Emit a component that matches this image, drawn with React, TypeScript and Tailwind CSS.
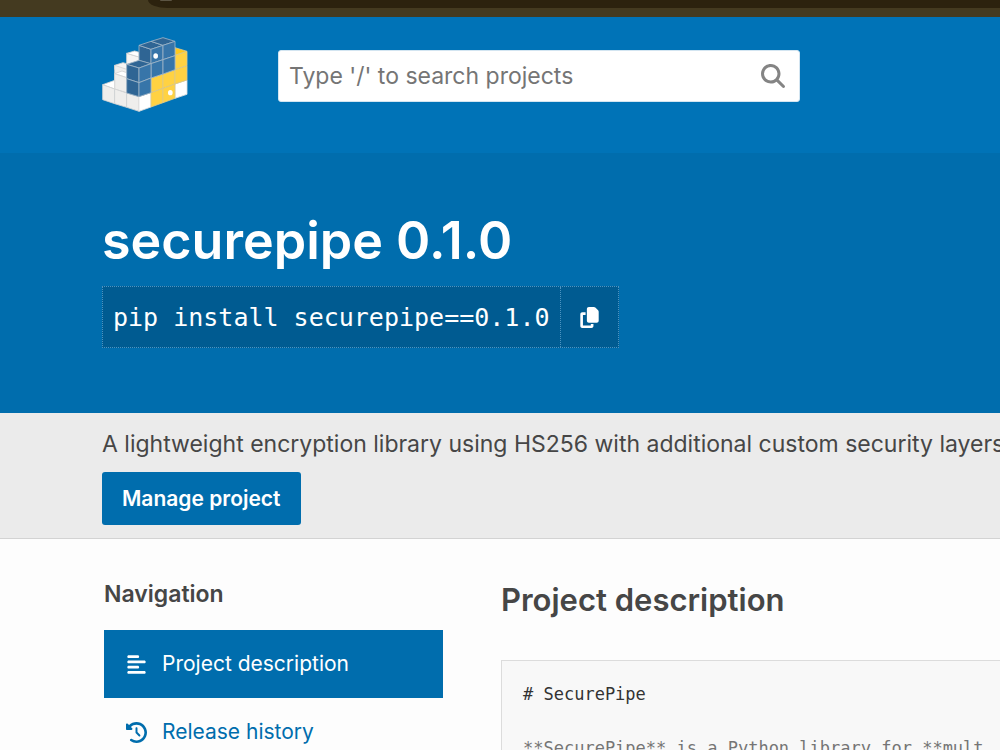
import { useState } from 'react'
import { FaAlignLeft, FaClockRotateLeft, FaCopy, FaMagnifyingGlass } from 'react-icons/fa6'

const PIP_COMMAND = 'pip install securepipe==0.1.0'

function Logo() {
  return (
    <svg viewBox="20 20 258 225" className="h-[75px] w-[86px]" aria-hidden="true">
      <g strokeWidth="2.5" strokeLinejoin="round">
        {/* white steps on the left */}
        <g fill="#efeeec" stroke="#d2d2d2">
          <path d="M94 69L131 80V110H94Z" fill="#f5f4f3" />
          <path d="M94 69L118 62L131 66V80Z" fill="#fff" />
          <path d="M58 105L83 97L94 100V130L58 117Z" fill="#f5f4f3" />
          <path d="M58 105L94 117V187L58 176Z" />
          <path d="M58 130L80 122L94 127V142Z" fill="#fff" />
          <path d="M58 130L94 142V187L58 176Z" />
          <path d="M22 163L58 150V176Z" fill="#fff" />
          <path d="M22 163L58 176V220L22 208Z" />
          <path d="M58 176L94 188V231L58 220Z" />
          <path d="M94 188L131 199V243L94 231Z" />
        </g>
        {/* yellow and white right side */}
        <g fill="#fff" stroke="#dedede">
          <path d="M131 199L167 187V230L131 243Z" />
          <path d="M239 161L275 149V192L239 204Z" />
        </g>
        <g fill="#ffd242" stroke="#dcc98c">
          <path d="M239 52L275 63L239 75Z" fill="#ffc91d" />
          <path d="M167 143L203 131V174L167 187Z" />
          <path d="M167 187L203 174V217L167 230Z" />
          <path d="M203 131L239 118V161L203 174Z" />
          <path d="M203 174L239 161V204L203 217Z" />
          <path d="M239 75L275 63V106L239 118Z" />
          <path d="M239 118L275 106V149L239 161Z" />
        </g>
        {/* blue blocks */}
        <g fill="#3775a9" stroke="#9fb4c6">
          <path d="M131 45L167 57V101L131 90Z" fill="#2f6594" />
          <path d="M131 45L167 33L203 45L167 57Z" fill="#2f6594" />
          <path d="M167 33L203 22L239 33L203 45Z" fill="#2f6594" />
          <path d="M167 57L203 45V88L167 100Z" />
          <path d="M203 45L239 33V76L203 88Z" />
          <path d="M167 100L203 88V131L167 143Z" />
          <path d="M203 88L239 76V118L203 131Z" />
          <path d="M94 102L131 90L167 100L131 113Z" fill="#2f6594" />
          <path d="M94 102L131 113V157L94 145Z" fill="#2f6594" />
          <path d="M94 145L131 157V199L94 188Z" fill="#2f6594" />
          <path d="M131 113L167 100V143L131 157Z" />
          <path d="M131 157L167 143V187L131 199Z" />
        </g>
      </g>
      <ellipse cx="181" cy="77" rx="7" ry="8" fill="#fff" />
      <ellipse cx="225" cy="187" rx="7" ry="8" fill="#fff" />
    </svg>
  )
}

export default function App() {
  const [search, setSearch] = useState('')

  return (
    <div className="h-screen overflow-hidden bg-[#fdfdfd] font-['Inter',sans-serif] text-[#464646]">
      {/* bottom edge of the browser toolbar */}
      <div className="h-[17px] bg-[#443a20]">
        <div className="ml-[148px] h-2 rounded-bl-[20px_8px] bg-[#2c220e] pl-3">
          <div className="h-px w-3 rounded-b-full bg-[#5c5544]" />
        </div>
      </div>

      <header className="flex h-[136px] items-start bg-[#0073b7] pl-[102px] pr-[200px] pt-5">
        <a href="#home" aria-label="PyPI" className="shrink-0">
          <Logo />
        </a>
        <form
          role="search"
          onSubmit={e => e.preventDefault()}
          className="ml-[90px] mt-[13px] flex h-[52px] grow items-center rounded-[3px] border border-[#d3e5f1] bg-white"
        >
          <input
            type="text"
            aria-label="Search PyPI"
            placeholder="Type '/' to search projects"
            value={search}
            onChange={e => setSearch(e.target.value)}
            className="h-full min-w-0 grow bg-transparent pl-[10px] text-[23px] placeholder:text-[#757575] focus:outline-none"
          />
          <button type="submit" aria-label="Search" className="px-[14px] text-[#848484]">
            <FaMagnifyingGlass size={24} />
          </button>
        </form>
      </header>

      <section className="h-[260px] bg-[#006dad] px-[102px] pt-[56px] text-white">
        <h1 className="text-[52px] font-semibold leading-[64px]">securepipe 0.1.0</h1>
        <div className="mt-[13px] inline-flex h-[62px] border border-dotted border-[#4d93c0] bg-[#005b91]">
          <span className="flex items-center whitespace-pre px-[10px] pt-px font-['DejaVu_Sans_Mono',monospace] text-[25px]">
            {PIP_COMMAND}
          </span>
          <button
            type="button"
            aria-label="Copy PIP instructions"
            onClick={() => navigator.clipboard?.writeText(PIP_COMMAND)}
            className="flex w-[58px] items-center justify-center border-l border-dotted border-[#4d93c0]"
          >
            <FaCopy size={21} />
          </button>
        </div>
      </section>

      <section className="h-[126px] border-b border-[#d3d3d3] bg-[#ebebeb] pl-[102px] pt-[15px]">
        <p className="whitespace-nowrap text-[23px] leading-8">
          A lightweight encryption library using HS256 with additional custom security layers
        </p>
        <a
          href="#manage"
          className="mt-3 inline-flex h-[53px] items-center rounded-[3px] bg-[#006dad] px-5 text-[21px] font-semibold text-white"
        >
          Manage project
        </a>
      </section>

      <main className="flex pl-[104px]">
        <nav aria-label="Project navigation" className="w-[339px] shrink-0 pt-[39px]">
          <h2 className="text-[23px] font-semibold leading-8">Navigation</h2>
          <ul className="mt-5 text-[21px]">
            <li>
              <a href="#description" className="flex h-[68px] items-center gap-[15px] bg-[#006dad] pl-[22px] text-white">
                <FaAlignLeft size={21} />
                Project description
              </a>
            </li>
            <li>
              <a href="#history" className="flex h-[68px] items-center gap-[15px] pl-[22px] text-[#006dad]">
                <FaClockRotateLeft size={21} />
                Release history
              </a>
            </li>
          </ul>
        </nav>
        <article className="ml-[58px] min-w-0 grow pt-[39px]">
          <h2 className="text-[31px] font-semibold leading-[44px]">Project description</h2>
          <pre className="mt-[38px] overflow-hidden border border-r-0 border-[#dcdcdc] bg-[#f8f8f8] pl-[21px] pt-5 font-['DejaVu_Sans_Mono',monospace] text-[17px] leading-[27px]">
            <span className="text-[#333333]"># SecurePipe</span>
            {'\n\n'}
            <span className="text-[#757575]">**SecurePipe** is a Python library for **mult</span>
          </pre>
        </article>
      </main>
    </div>
  )
}
